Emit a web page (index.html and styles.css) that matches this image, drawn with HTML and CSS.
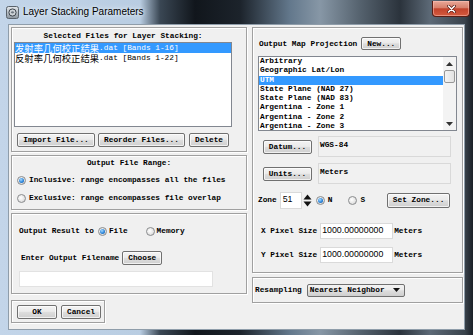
FILE: index.html
```html
<!DOCTYPE html>
<html lang="zh-CN">
<head>
    <meta charset="UTF-8">
    <meta name="viewport" content="width=device-width, initial-scale=1.0">
    <title>Layer Stacking Parameters</title>
    <link rel="stylesheet" href="styles.css">
</head>
<body>
    <div class="window">
        <div class="titlebar">
            <div class="app-icon">
                <svg width="13" height="13" viewBox="0 0 13 13">
                    <defs>
                        <linearGradient id="ig" x1="0" y1="0" x2="0" y2="1">
                            <stop offset="0" stop-color="#e4e8ec"/>
                            <stop offset="1" stop-color="#8c959e"/>
                        </linearGradient>
                    </defs>
                    <rect x="0.5" y="0.5" width="12" height="12" rx="2" fill="url(#ig)" stroke="#59626b"/>
                    <circle cx="6.5" cy="6.5" r="3.6" fill="#cfd4d9" stroke="#3d444b" stroke-width="1"/>
                    <path d="M4.6 6.2 Q6.5 4.2 8.4 6.2 Q6.5 8.8 4.6 6.2 Z" fill="#6f7880"/>
                </svg>
            </div>
            <span class="title">Layer Stacking Parameters</span>
            <div class="close-btn">
                <svg width="9" height="8" viewBox="0 0 9 8">
                    <path d="M1.5 1 L7.5 7 M7.5 1 L1.5 7" stroke="#5a1a12" stroke-width="3" stroke-linecap="round"/>
                    <path d="M1.5 1 L7.5 7 M7.5 1 L1.5 7" stroke="#ffffff" stroke-width="1.6" stroke-linecap="round"/>
                </svg>
            </div>
        </div>

        <div class="client">
            <div class="col-left">
                <!-- 输入文件 -->
                <div class="panel files-panel">
                    <div class="panel-title files-title">Selected Files for Layer Stacking:</div>
                    <div class="listbox files-list">
                        <div class="item selected"><span class="cjk">发射率几何校正结果</span><span>.dat [Bands 1-16]</span></div>
                        <div class="item"><span class="cjk">反射率几何校正结果</span><span>.dat [Bands 1-22]</span></div>
                    </div>
                    <div class="btn-row files-btns">
                        <button class="btn btn-import">Import File...</button>
                        <button class="btn btn-reorder">Reorder Files...</button>
                        <button class="btn btn-delete">Delete</button>
                    </div>
                </div>

                <!-- 输出范围 -->
                <div class="panel range-panel">
                    <div class="panel-title">Output File Range:</div>
                    <div class="radio-row range-first">
                        <span class="radio on"></span>
                        <span class="radio-label">Inclusive: range encompasses all the files</span>
                    </div>
                    <div class="radio-row range-second">
                        <span class="radio"></span>
                        <span class="radio-label">Exclusive: range encompasses file overlap</span>
                    </div>
                </div>

                <!-- 输出结果 -->
                <div class="panel output-panel">
                    <div class="output-row">
                        <span>Output Result to</span>
                        <span class="radio on out-file"></span>
                        <span class="radio-label">File</span>
                        <span class="radio out-memory"></span>
                        <span class="radio-label">Memory</span>
                    </div>
                    <div class="filename-row">
                        <span>Enter Output Filename</span>
                        <button class="btn btn-choose">Choose</button>
                    </div>
                    <div class="text-field filename-field"></div>
                </div>

                <div class="panel action-panel">
                    <button class="btn btn-ok">OK</button>
                    <button class="btn btn-cancel">Cancel</button>
                </div>
            </div>

            <div class="col-right">
                <!-- 投影 -->
                <div class="panel proj-panel">
                    <div class="proj-head">
                        <span>Output Map Projection</span>
                        <button class="btn btn-new">New...</button>
                    </div>
                    <div class="listbox proj-list">
                        <div class="proj-items">
                            <div class="pitem">Arbitrary</div>
                            <div class="pitem">Geographic Lat/Lon</div>
                            <div class="pitem selected">UTM</div>
                            <div class="pitem">State Plane (NAD 27)</div>
                            <div class="pitem">State Plane (NAD 83)</div>
                            <div class="pitem">Argentina - Zone 1</div>
                            <div class="pitem">Argentina - Zone 2</div>
                            <div class="pitem">Argentina - Zone 3</div>
                        </div>
                        <div class="scrollbar">
                            <div class="sb-arrow">
                                <svg width="7" height="4" viewBox="0 0 7 4"><polygon points="0,4 3.5,0 7,4" fill="#333"/></svg>
                            </div>
                            <div class="sb-thumb"></div>
                            <div class="sb-track"></div>
                            <div class="sb-arrow">
                                <svg width="7" height="4" viewBox="0 0 7 4"><polygon points="0,0 7,0 3.5,4" fill="#333"/></svg>
                            </div>
                        </div>
                    </div>
                    <div class="info-row datum-row">
                        <button class="btn btn-wide">Datum...</button>
                        <div class="info-field">WGS-84</div>
                    </div>
                    <div class="info-row units-row">
                        <button class="btn btn-wide">Units...</button>
                        <div class="info-field">Meters</div>
                    </div>
                    <div class="zone-row">
                        <span class="zone-label">Zone</span>
                        <div class="text-field zone-field">51</div>
                        <div class="spinner">
                            <svg width="9" height="13" viewBox="0 0 9 13">
                                <polygon points="0.5,5.5 4.5,0.5 8.5,5.5" fill="#111"/>
                                <polygon points="0.5,7.5 4.5,12.5 8.5,7.5" fill="#111"/>
                            </svg>
                        </div>
                        <span class="radio on zone-n"></span>
                        <span class="radio-label">N</span>
                        <span class="radio zone-s"></span>
                        <span class="radio-label">S</span>
                        <button class="btn btn-setzone">Set Zone...</button>
                    </div>
                    <div class="pixel-row x-row">
                        <span>X Pixel Size</span>
                        <div class="text-field pixel-field">1000.00000000</div>
                        <span class="unit">Meters</span>
                    </div>
                    <div class="pixel-row y-row">
                        <span>Y Pixel Size</span>
                        <div class="text-field pixel-field">1000.00000000</div>
                        <span class="unit">Meters</span>
                    </div>
                </div>

                <div class="panel resample-panel">
                    <span>Resampling</span>
                    <div class="dropdown">
                        <span>Nearest Neighbor</span>
                        <svg width="7" height="4" viewBox="0 0 7 4"><polygon points="0,0 7,0 3.5,4" fill="#111"/></svg>
                    </div>
                </div>
            </div>
        </div>
    </div>
</body>
</html>
```

FILE: styles.css
```css
* {
    margin: 0;
    padding: 0;
    box-sizing: border-box;
}

body {
    width: 473px;
    height: 335px;
    overflow: hidden;
    background: #1b2027;
    font-family: "Liberation Mono", "Noto Sans CJK SC", monospace;
    font-size: 7.8px;
    font-weight: 700;
    color: #000;
}

button {
    font: inherit;
    color: inherit;
}

/* 窗口外框 */
.window {
    width: 473px;
    height: 335px;
    display: flex;
    flex-direction: column;
    background: linear-gradient(90deg,
        #c3d5e9 0px, #b9cde2 140px, #3a4754 160px, #11161c 195px,
        #1c232b 240px, #63788c 290px, #8797a6 320px, #55626e 360px,
        #2b333c 400px, #5c6976 430px, #39424b 465px, #1b2027 473px);
}

.titlebar {
    height: 24px;
    display: flex;
    align-items: flex-start;
    padding: 0 3px 0 6px;
}

.app-icon {
    width: 13px;
    height: 13px;
    margin-top: 6px;
}

.app-icon svg {
    display: block;
}

.title {
    margin: 5px 0 0 4px;
    font-family: "Liberation Sans", sans-serif;
    font-weight: 400;
    font-size: 10px;
    line-height: 14px;
    color: #000;
    text-shadow: 0 0 6px #e8f0f8, 0 0 3px #e8f0f8;
}

.close-btn {
    margin: 1px 0 0 auto;
    width: 38px;
    height: 16px;
    border: 1px solid #5b1d14;
    border-top: none;
    border-radius: 0 0 4px 4px;
    background: linear-gradient(#e9a898 0%, #d7806c 45%, #c2432c 52%, #d45a3e 100%);
    box-shadow: inset 0 0 0 1px rgba(255, 200, 190, 0.5);
    display: flex;
    align-items: center;
    justify-content: center;
}

.close-btn svg {
    display: block;
}

/* 客户区 */
.client {
    height: 306px;
    margin: 0 8px;
    background: #f0f0f0;
    border: 1px solid #8f9daa;
    display: flex;
    gap: 5px;
    padding: 2px 1px 0 2px;
}

.col-left {
    width: 236px;
    display: flex;
    flex-direction: column;
}

.col-right {
    width: 211px;
    display: flex;
    flex-direction: column;
}

.panel {
    border: 1px solid #a0a0a0;
    box-shadow: inset 1px 1px 0 #ffffff, 1px 1px 0 #ffffff;
}

.panel-title {
    height: 10px;
    line-height: 10px;
    text-align: center;
    white-space: nowrap;
}

.listbox {
    background: #fff;
    border: 1px solid #828790;
}

.btn {
    height: 14px;
    border: 1px solid #707070;
    border-radius: 2px;
    background: linear-gradient(#f3f3f3 0%, #ebebeb 45%, #dddddd 52%, #cfcfcf 100%);
    box-shadow: inset 0 0 0 1px rgba(255, 255, 255, 0.7);
    display: flex;
    align-items: center;
    justify-content: center;
    white-space: nowrap;
    flex: none;
}

.radio {
    position: relative;
    flex: none;
    width: 9px;
    height: 9px;
    border-radius: 50%;
    border: 1px solid #8a8c8e;
    background: radial-gradient(circle at 40% 40%, #ffffff 0%, #e6e6e6 55%, #c8c8c8 100%);
}

.radio.on::after {
    content: "";
    position: absolute;
    left: 1px;
    top: 1px;
    width: 5px;
    height: 5px;
    border-radius: 50%;
    background: radial-gradient(circle at 40% 35%, #a8dbff 0%, #2c86dc 55%, #0d4f96 100%);
}

.radio-label {
    white-space: nowrap;
}

.text-field {
    background: #fff;
    border: 1px solid #dadada;
}

/* 左侧：文件列表 */
.files-panel {
    height: 125px;
}

.files-title {
    width: 218px;
    margin: 3px 0 0 2px;
}

.files-list {
    margin: 1px 0 0 2px;
    width: 218px;
    height: 85px;
    font-weight: 400;
}

.item {
    height: 10px;
    display: flex;
    align-items: center;
    white-space: nowrap;
}

.item span {
    line-height: 10px;
}

.item.selected {
    background: #3399ff;
    color: #fff;
}

.cjk {
    font-family: "Noto Sans CJK SC", sans-serif;
    font-size: 9.35px;
}

.btn-row {
    display: flex;
}

.files-btns {
    margin: 6px 0 0 5px;
}

.btn-import {
    width: 78px;
}

.btn-reorder {
    width: 87px;
    margin-left: 3px;
}

.btn-delete {
    width: 40px;
    margin-left: 4px;
}

/* 输出范围 */
.range-panel {
    height: 55px;
    margin-top: 3px;
}

.range-panel .panel-title {
    margin-top: 2px;
}

.radio-row {
    height: 10px;
    display: flex;
    align-items: center;
    gap: 3px;
    padding-left: 5px;
}

.range-first {
    margin-top: 7px;
}

.range-second {
    margin-top: 8px;
}

/* 输出结果 */
.output-panel {
    height: 81px;
    margin-top: 3px;
}

.output-row {
    height: 10px;
    margin-top: 12px;
    padding-left: 7px;
    display: flex;
    align-items: center;
    white-space: nowrap;
}

.out-file {
    margin: 0 2px 0 4px;
}

.out-memory {
    margin: 0 2px 0 18px;
}

.filename-row {
    height: 14px;
    margin-top: 15px;
    padding-left: 9px;
    display: flex;
    align-items: center;
}

.btn-choose {
    width: 40px;
    margin-left: 3px;
}

.filename-field {
    width: 194px;
    height: 16px;
    margin: 6px 0 0 7px;
    border-color: #e2e2e2;
}

.action-panel {
    width: 94px;
    height: 23px;
    margin-top: 6px;
    display: flex;
    padding: 4px 0 0 5px;
}

.btn-ok {
    width: 40px;
}

.btn-cancel {
    width: 40px;
    margin-left: 4px;
}

/* 右侧：投影 */
.proj-panel {
    height: 246px;
}

.proj-head {
    height: 13px;
    margin-top: 9px;
    padding-left: 6px;
    display: flex;
    align-items: center;
}

.btn-new {
    width: 40px;
    height: 13px;
    margin-left: 4px;
}

.proj-list {
    width: 199px;
    height: 75px;
    margin: 6px 0 0 5px;
    display: flex;
}

.proj-items {
    flex: 1;
}

.pitem {
    height: 9.25px;
    line-height: 9.25px;
    padding-left: 1px;
    white-space: nowrap;
}

.pitem.selected {
    background: #3399ff;
    color: #fff;
}

.scrollbar {
    width: 13px;
    display: flex;
    flex-direction: column;
    background: #f3f3f3;
}

.sb-arrow {
    height: 13px;
    display: flex;
    align-items: center;
    justify-content: center;
}

.sb-arrow svg {
    display: block;
}

.sb-thumb {
    height: 13px;
    margin: 0 1px;
    border: 1px solid #979797;
    border-radius: 2px;
    background: linear-gradient(90deg, #f4f4f4, #e2e2e2);
}

.sb-track {
    flex: 1;
}

.info-row {
    height: 21px;
    padding-left: 10px;
    display: flex;
    align-items: center;
}

.datum-row {
    margin-top: 5px;
}

.units-row {
    margin-top: 6px;
}

.btn-wide {
    width: 49px;
}

.info-field {
    width: 133px;
    height: 21px;
    margin-left: 6px;
    padding: 3px 1px 0 1px;
    line-height: 10px;
    background: #f1f1f1;
    border: 1px solid #d9d9d9;
}

.zone-row {
    height: 18px;
    margin-top: 7px;
    padding-left: 5px;
    display: flex;
    align-items: center;
}

.zone-field {
    width: 22px;
    height: 17px;
    margin-left: 3px;
    padding: 1px 0 0 2px;
    font-family: "Liberation Sans", sans-serif;
    font-weight: 400;
    font-size: 8.8px;
    line-height: 10px;
}

.spinner {
    margin-left: 1px;
    width: 9px;
    height: 13px;
}

.spinner svg {
    display: block;
}

.zone-n {
    margin: 0 3px 0 4px;
}

.zone-s {
    margin: 0 3px 0 16px;
}

.btn-setzone {
    width: 63px;
    height: 15px;
    margin-left: 22px;
}

.pixel-row {
    height: 16px;
    padding-left: 8px;
    display: flex;
    align-items: center;
    white-space: nowrap;
}

.x-row {
    margin-top: 14px;
}

.y-row {
    margin-top: 8px;
}

.pixel-field {
    width: 73px;
    height: 16px;
    margin-left: 3px;
    padding-left: 1px;
    font-family: "Liberation Sans", sans-serif;
    font-weight: 400;
    font-size: 8.8px;
    line-height: 13px;
}

.unit {
    margin-left: 1px;
}

/* 重采样 */
.resample-panel {
    height: 26px;
    margin-top: 4px;
    padding-left: 2px;
    display: flex;
    align-items: center;
}

.dropdown {
    width: 98px;
    height: 13px;
    margin-left: 5px;
    padding: 0 4px 0 2px;
    border: 1px solid #707070;
    border-radius: 2px;
    background: linear-gradient(#f3f3f3 0%, #ebebeb 45%, #dddddd 52%, #cfcfcf 100%);
    display: flex;
    align-items: center;
    justify-content: space-between;
    white-space: nowrap;
}

.dropdown svg {
    display: block;
}
```
